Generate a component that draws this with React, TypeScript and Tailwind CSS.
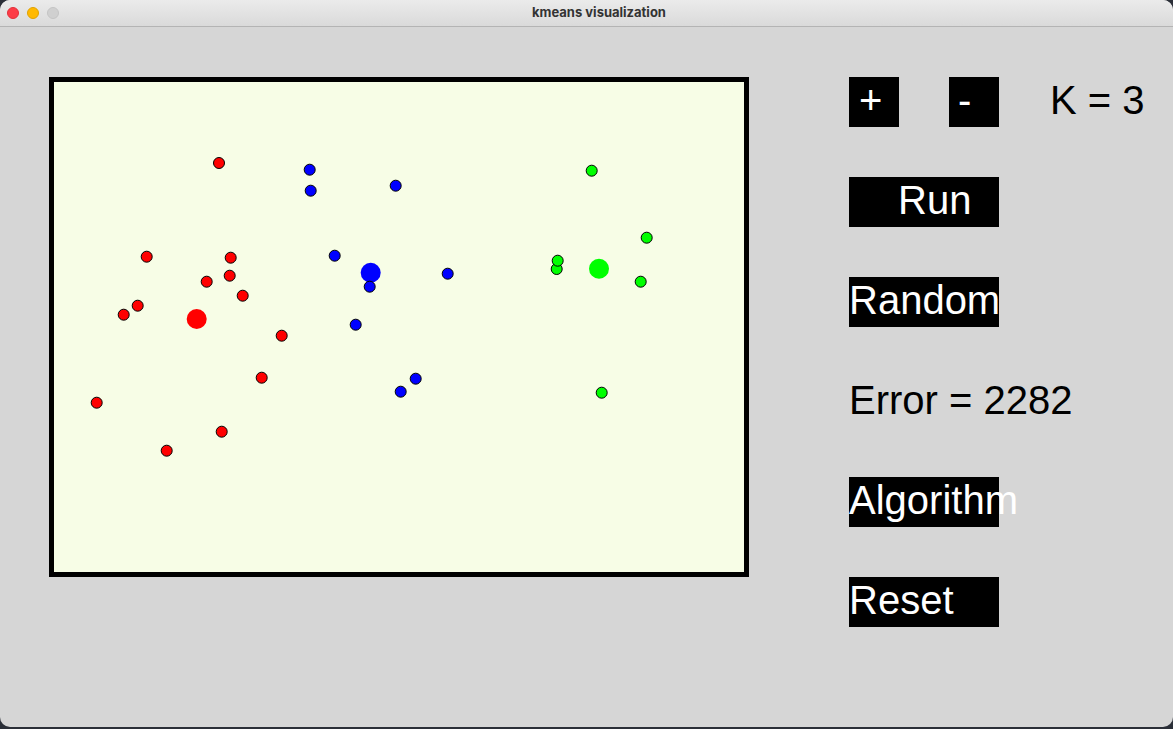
const points: { x: number; y: number; c: string }[] = [
  // red cluster
  { x: 219, y: 163, c: "#ff0000" },
  { x: 146.7, y: 256.7, c: "#ff0000" },
  { x: 230.7, y: 257.7, c: "#ff0000" },
  { x: 229.7, y: 275.7, c: "#ff0000" },
  { x: 206.7, y: 281.7, c: "#ff0000" },
  { x: 242.7, y: 295.7, c: "#ff0000" },
  { x: 137.7, y: 305.7, c: "#ff0000" },
  { x: 123.7, y: 314.7, c: "#ff0000" },
  { x: 281.7, y: 335.7, c: "#ff0000" },
  { x: 261.7, y: 377.7, c: "#ff0000" },
  { x: 96.7, y: 402.7, c: "#ff0000" },
  { x: 221.7, y: 431.7, c: "#ff0000" },
  { x: 166.7, y: 450.7, c: "#ff0000" },
  // blue cluster
  { x: 309.7, y: 169.7, c: "#0000ff" },
  { x: 310.7, y: 190.7, c: "#0000ff" },
  { x: 395.7, y: 185.7, c: "#0000ff" },
  { x: 334.7, y: 255.7, c: "#0000ff" },
  { x: 369.7, y: 286.7, c: "#0000ff" },
  { x: 447.7, y: 273.7, c: "#0000ff" },
  { x: 355.7, y: 324.7, c: "#0000ff" },
  { x: 415.7, y: 378.7, c: "#0000ff" },
  { x: 400.7, y: 391.7, c: "#0000ff" },
  // green cluster
  { x: 591.7, y: 170.7, c: "#00ff00" },
  { x: 646.7, y: 237.7, c: "#00ff00" },
  { x: 556.7, y: 269, c: "#00ff00" },
  { x: 557.7, y: 260.7, c: "#00ff00" },
  { x: 640.7, y: 281.7, c: "#00ff00" },
  { x: 601.7, y: 392.7, c: "#00ff00" },
];

const centroids = [
  { x: 196.7, y: 319, c: "#ff0000" },
  { x: 370.7, y: 272.7, c: "#0000ff" },
  { x: 599, y: 268.7, c: "#00ff00" },
];

const font = { fontFamily: '"Liberation Sans", Arial, sans-serif' };

function Plot() {
  return (
    <div className="ml-[49px] mt-[50px] h-[500px] w-[700px] shrink-0 border-[5px] border-black bg-[#f7fde6]">
      <svg width={690} height={490} viewBox="54 82 690 490" className="block">
        {centroids.map((p, i) => (
          <circle key={`c${i}`} cx={p.x} cy={p.y} r={10} fill={p.c} />
        ))}
        {points.map((p, i) => (
          <circle key={i} cx={p.x} cy={p.y} r={5.5} fill={p.c} stroke="#000" strokeWidth={1} />
        ))}
      </svg>
    </div>
  );
}

function Button({ label, pad = "pl-0" }: { label: string; pad?: string }) {
  return (
    <div
      className={`h-[50px] w-[150px] whitespace-nowrap bg-black text-[40px] leading-[47px] text-white ${pad}`}
    >
      {label}
    </div>
  );
}

function Controls() {
  return (
    <div className="ml-[100px] mt-[50px] flex flex-col gap-[50px]" style={font}>
      <div className="flex h-[50px] items-start text-[40px] leading-[47px]">
        <div className="h-[50px] w-[50px] bg-black pl-[10px] text-white">+</div>
        <div className="ml-[50px] h-[50px] w-[50px] bg-black pl-[9px] text-white">-</div>
        <div className="ml-[51px] whitespace-nowrap text-black">K = 3</div>
      </div>
      <Button label="Run" pad="pl-[49px]" />
      <Button label="Random" />
      <div className="h-[50px] whitespace-nowrap text-[40px] leading-[47px] text-black">
        Error = 2282
      </div>
      <Button label="Algorithm" />
      <Button label="Reset" />
    </div>
  );
}

export default function App() {
  return (
    <div className="h-[729px] w-[1173px] overflow-hidden bg-[#2b2f38]">
      <div className="flex h-[727px] flex-col overflow-hidden rounded-[10px] bg-[#d6d6d6]">
        <div className="relative flex h-[27px] shrink-0 items-center border-b border-[#b4b4b4] bg-gradient-to-b from-[#ebebeb] to-[#dadada]">
          <div className="absolute left-[7px] top-[7px] flex gap-[8px]">
            <span className="h-[12px] w-[12px] rounded-full border border-[#e2303a] bg-[#fd3c47]" />
            <span className="h-[12px] w-[12px] rounded-full border border-[#e0a200] bg-[#ffb901]" />
            <span className="h-[12px] w-[12px] rounded-full border border-[#c4c4c4] bg-[#d0d0d0]" />
          </div>
          <div
            className="w-full pl-[25px] text-center text-[13px] font-bold text-[#333333]"
            style={{ fontFamily: 'Inter, "Open Sans", sans-serif' }}
          >
            kmeans visualization
          </div>
        </div>
        <div className="flex items-start">
          <Plot />
          <Controls />
        </div>
      </div>
    </div>
  );
}
